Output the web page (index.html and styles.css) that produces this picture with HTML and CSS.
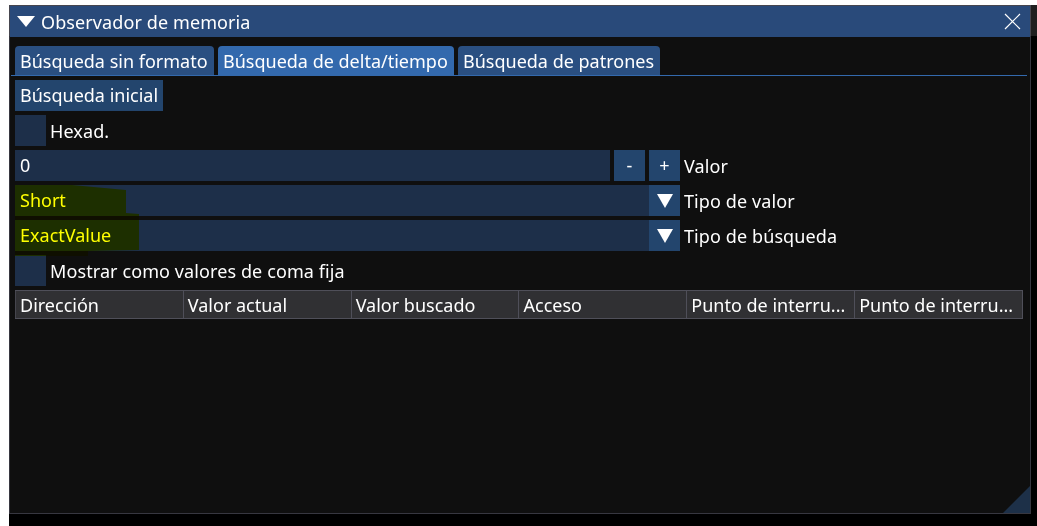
FILE: index.html
```html
<!DOCTYPE html>
<html lang="es">

<head>
    <meta charset="UTF-8">
    <meta name="viewport" content="width=device-width, initial-scale=1.0">
    <title>Observador de memoria</title>
    <link rel="stylesheet" href="styles.css">
</head>

<body>
    <div class="screen">
        <div class="window">
            <div class="titlebar">
                <svg class="collapse" width="18" height="13" viewBox="0 0 18 13">
                    <polygon points="0,1 18,1 9,12" fill="#fff" />
                </svg>
                <span class="title">Observador de memoria</span>
                <svg class="close" width="17" height="17" viewBox="0 0 17 17">
                    <path d="M1 1 L16 16 M16 1 L1 16" stroke="#fff" stroke-width="1.2" fill="none" />
                </svg>
            </div>

            <div class="content">
                <div class="tabbar">
                    <div class="tab tab-raw">Búsqueda sin formato</div>
                    <div class="tab tab-delta active">Búsqueda de delta/tiempo</div>
                    <div class="tab tab-pattern">Búsqueda de patrones</div>
                </div>

                <div class="rows">
                    <div class="row">
                        <div class="btn">Búsqueda inicial</div>
                    </div>

                    <div class="row">
                        <span class="checkbox"></span>
                        <span class="label">Hexad.</span>
                    </div>

                    <div class="row">
                        <div class="input">0</div>
                        <div class="btn square">-</div>
                        <div class="btn square">+</div>
                        <span class="label">Valor</span>
                    </div>

                    <div class="row">
                        <div class="combo">
                            <span class="combo-value">Short</span>
                            <span class="combo-arrow">
                                <svg width="16" height="15" viewBox="0 0 16 15">
                                    <polygon points="0,1 16,1 8,15" fill="#fff" />
                                </svg>
                            </span>
                        </div>
                        <span class="label">Tipo de valor</span>
                    </div>

                    <div class="row">
                        <div class="combo">
                            <span class="combo-value">ExactValue</span>
                            <span class="combo-arrow">
                                <svg width="16" height="15" viewBox="0 0 16 15">
                                    <polygon points="0,1 16,1 8,15" fill="#fff" />
                                </svg>
                            </span>
                        </div>
                        <span class="label">Tipo de búsqueda</span>
                    </div>

                    <div class="row">
                        <span class="checkbox"></span>
                        <span class="label">Mostrar como valores de coma fija</span>
                    </div>

                    <table class="results">
                        <thead>
                            <tr>
                                <th>Dirección</th>
                                <th>Valor actual</th>
                                <th>Valor buscado</th>
                                <th>Acceso</th>
                                <th>Punto de interru...</th>
                                <th>Punto de interru...</th>
                            </tr>
                        </thead>
                    </table>
                </div>
            </div>

            <div class="grip"></div>
        </div>
    </div>

    <!-- highlighter stroke drawn over the two combo values -->
    <svg class="marker" width="1037" height="526" viewBox="0 0 1037 526">
        <polygon points="15,185 72,185 126,190 126,213 139,214 139,250 88,251 88,256 15,256" fill="#ffff00" />
    </svg>
</body>

</html>
```

FILE: styles.css
```css
body {
    margin: 0;
    background: #fff;
    font-family: "Noto Sans", sans-serif;
    font-size: 18px;
    color: #fff;
    position: relative;
    overflow: hidden;
}

.screen {
    margin: 5px 0 0 9px;
    height: 521px;
    background: linear-gradient(#1f1f1f 31px, #000 31px);
}

.window {
    position: relative;
    width: 1022px;
    height: 509px;
    box-sizing: border-box;
    border: 1px solid rgba(110, 110, 128, 0.5);
    background: #0f0f0f;
    background-clip: padding-box;
}

.titlebar {
    height: 31px;
    display: flex;
    align-items: center;
    padding: 0 9px 0 7px;
    background: #294a7a;
}

.collapse {
    margin-right: 6px;
}

.title {
    letter-spacing: 0.1px;
}

.close {
    margin-left: auto;
}

.content {
    padding: 9px 8px 0 5px;
}

.tabbar {
    display: flex;
    gap: 4px;
    margin: 0 -5px 0 -4px;
    padding-left: 4px;
    border-bottom: 1px solid #3369ad;
}

.tab {
    height: 29px;
    line-height: 30px;
    padding: 0 5px;
    box-sizing: border-box;
    background: #2a4f81;
    border-radius: 4px 4px 0 0;
    white-space: nowrap;
}

.tab-raw {
    width: 199px;
}

.tab-delta {
    width: 236px;
}

.tab-pattern {
    width: 202px;
}

.tab.active {
    background: #3369ad;
}

.rows {
    display: flex;
    flex-direction: column;
    gap: 4px;
    margin-top: 4px;
}

.row {
    display: flex;
    align-items: center;
    gap: 4px;
    height: 31px;
}

.btn {
    height: 31px;
    line-height: 31px;
    padding: 0 5px;
    background: #23456d;
    white-space: nowrap;
}

.btn.square {
    width: 31px;
    padding: 0;
    text-align: center;
}

.checkbox {
    width: 31px;
    height: 31px;
    background: #1d2f49;
}

.label {
    white-space: nowrap;
    letter-spacing: 0.1px;
}

.input {
    width: 590px;
    height: 31px;
    line-height: 31px;
    padding-left: 5px;
    background: #1d2f49;
}

.combo {
    display: flex;
    width: 665px;
    height: 31px;
    background: #1d2f49;
}

.combo-value {
    flex: 1;
    line-height: 31px;
    padding-left: 5px;
    color: #fff;
}

.combo-arrow {
    width: 31px;
    display: flex;
    align-items: center;
    justify-content: center;
    background: #23456d;
}

.results {
    width: 1008px;
    table-layout: fixed;
    border-collapse: collapse;
}

.results th {
    height: 27px;
    padding: 0 4px;
    background: #303033;
    border: 1px solid #4f4f59;
    border-left-color: #45454d;
    font-weight: normal;
    text-align: left;
    white-space: nowrap;
    overflow: hidden;
}

.grip {
    position: absolute;
    right: 0;
    bottom: 0;
    width: 27px;
    height: 27px;
    background: #1d3048;
    clip-path: polygon(100% 0, 100% 100%, 0 100%);
}

.marker {
    position: absolute;
    top: 0;
    left: 0;
    mix-blend-mode: multiply;
    pointer-events: none;
}
```
